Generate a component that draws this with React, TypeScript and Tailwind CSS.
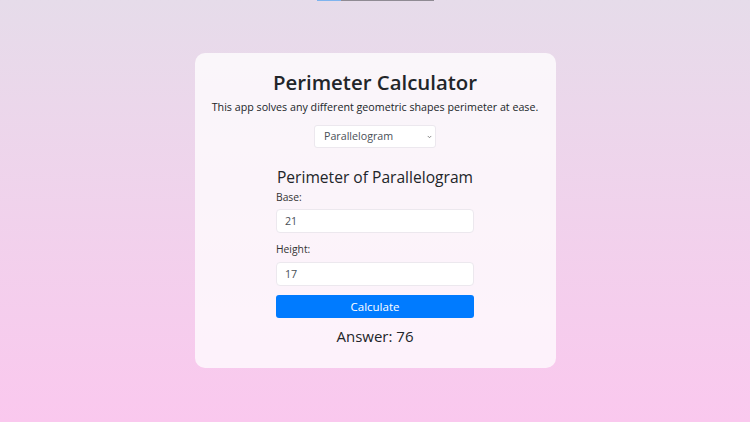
import React, { useState } from "react";

const shapes = ["Parallelogram", "Rectangle", "Square", "Triangle", "Circle"];

const App = () => {
  const [shape, setShape] = useState("Parallelogram");
  const [base, setBase] = useState("21");
  const [height, setHeight] = useState("17");
  const [answer, setAnswer] = useState<number | null>(76);

  const handleCalculate = () => {
    const b = parseFloat(base) || 0;
    const h = parseFloat(height) || 0;
    setAnswer(2 * (b + h));
  };

  return (
    <div
      className="min-h-screen bg-gradient-to-b from-[#e6dcea] to-[#fac8ee] text-[#212529]"
      style={{ fontFamily: '"Open Sans", "Noto Sans", sans-serif' }}
    >
      {/* Top strip */}
      <div className="flex justify-center">
        <div className="flex h-px w-[117px]">
          <div className="w-[24px] bg-[#7fb4ee]" />
          <div className="flex-1 bg-[#8f8b93]" />
        </div>
      </div>

      <div className="mx-auto mt-[52px] w-[361px] rounded-[10px] bg-white/75 pt-[14px] pb-[20px] text-center">
        <h1 className="text-[20.4px] font-semibold leading-[30px] text-[#222529]">
          Perimeter Calculator
        </h1>
        <p className="mt-[2px] text-[10.7px] leading-[16px] text-[#212529]">
          This app solves any different geometric shapes perimeter at ease.
        </p>

        <div className="mt-[10px] flex justify-center">
          <div className="relative flex">
            <select
              value={shape}
              onChange={(e) => setShape(e.target.value)}
              className="block h-[23px] w-[122px] appearance-none rounded-[3px] border border-[#ece8ee] bg-white pl-[9px] text-left text-[10.7px] text-[#495057] outline-none"
            >
              {shapes.map((s) => (
                <option key={s} value={s}>
                  {s}
                </option>
              ))}
            </select>
            <svg
              className="pointer-events-none absolute right-[4px] top-[10px] h-[4px] w-[5px]"
              viewBox="0 0 6 5"
              fill="none"
              stroke="#6c6c6c"
              strokeWidth="1"
            >
              <path d="M0.8 1.2 L3 3.4 L5.2 1.2" />
            </svg>
          </div>
        </div>

        <div className="mx-auto mt-[17px] w-[198px] text-left">
          <h2 className="whitespace-nowrap text-center text-[15.6px] leading-[24px] text-[#222529]">
            Perimeter of {shape}
          </h2>

          <label className="block text-[10.3px] leading-[16px] text-[#333]">
            Base:
          </label>
          <input
            value={base}
            onChange={(e) => setBase(e.target.value)}
            className="mt-[4px] block h-[24px] w-full rounded-[4px] border border-[#ece8ee] bg-white px-[8px] text-[10.7px] text-[#495057] outline-none"
          />

          <label className="mt-[8px] block text-[10.3px] leading-[16px] text-[#333]">
            Height:
          </label>
          <input
            value={height}
            onChange={(e) => setHeight(e.target.value)}
            className="mt-[5px] block h-[24px] w-full rounded-[4px] border border-[#ece8ee] bg-white px-[8px] text-[10.7px] text-[#495057] outline-none"
          />

          <button
            onClick={handleCalculate}
            className="mt-[9px] block h-[23px] w-full rounded-[3px] bg-[#007bff] text-[11.5px] font-medium text-white"
          >
            Calculate
          </button>

          <p className="mt-[6px] text-center text-[15px] leading-[24px] text-[#222529]">
            Answer: {answer}
          </p>
        </div>
      </div>
    </div>
  );
};

export default App;
